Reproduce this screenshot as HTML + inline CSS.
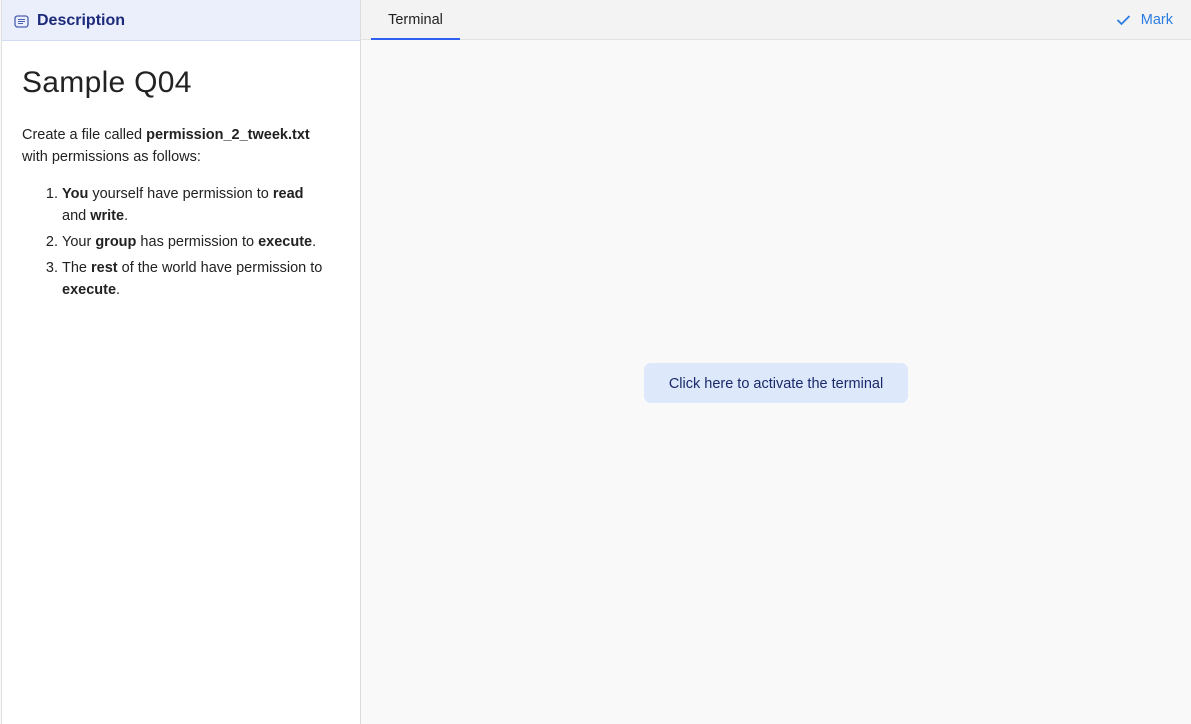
<!DOCTYPE html>
<html><head><meta charset="utf-8"><style>
*{margin:0;padding:0;box-sizing:border-box}
body{width:1191px;height:724px;overflow:hidden;font-family:"Liberation Sans",sans-serif;background:#f9f9f9;position:relative;color:#222}
.left{position:absolute;left:1px;top:0;width:360px;height:724px;background:#fff;border-right:1px solid #dcdcdc;border-left:1px solid #e0e0e0}
.lh{height:41px;background:#ebeffc;border-bottom:1px solid #d4dcf3;display:flex;align-items:center;padding-left:12px;padding-top:2px;color:#1c2a7a;font-size:16px;font-weight:bold}
.lh svg{margin-right:8px}
h1{font-weight:normal;font-size:30px;margin:25px 0 0 20px;color:#222;letter-spacing:0.3px}
.txt{margin:24px 0 0 20px;font-size:14.5px;line-height:22px;width:312px}
ol{margin:15px 0 0 60px;font-size:14.5px;line-height:22px;width:262px}
li{margin-bottom:4px}
.top{position:absolute;left:361px;top:0;right:0;height:40px;background:#f3f3f3;border-bottom:1px solid #e2e2e2}
.tab{position:absolute;left:10px;top:0;width:89px;height:40px;text-align:center;font-size:14.5px;line-height:40px;color:#222;border-bottom:2px solid #2f5ff0}
.mark{position:absolute;right:18px;top:0;line-height:40px;color:#2a7de1;font-size:14.5px;display:flex;align-items:center}
.mark svg{margin-right:10px}
.btn{position:absolute;left:644px;top:363px;width:264px;height:40px;background:#dde8fb;border-radius:7px;color:#1a2a6a;font-size:14.5px;text-align:center;line-height:42px}
</style></head><body>
<div class="left">
<div class="lh"><svg width="15" height="13" viewBox="0 0 15 13"><rect x="1" y="1" width="13" height="11" rx="2.5" fill="none" stroke="#4a5fb0" stroke-width="1.3"/><path d="M4 4.5h7M4 6.5h7M4 8.5h5" stroke="#4a5fb0" stroke-width="1.1"/></svg>Description</div>
<h1>Sample Q04</h1>
<div class="txt">Create a file called <b>permission_2_tweek.txt</b> with permissions as follows:</div>
<ol>
<li><b>You</b> yourself have permission to <b>read</b> and <b>write</b>.</li>
<li>Your <b>group</b> has permission to <b>execute</b>.</li>
<li>The <b>rest</b> of the world have permission to <b>execute</b>.</li>
</ol>
</div>
<div class="top"><div class="tab">Terminal</div>
<div class="mark"><svg width="15" height="12" viewBox="0 0 15 12"><path d="M1.5 6l4 4L13.5 2" fill="none" stroke="#2a7de1" stroke-width="1.8"/></svg>Mark</div></div>
<div class="btn">Click here to activate the terminal</div>
</body></html>
